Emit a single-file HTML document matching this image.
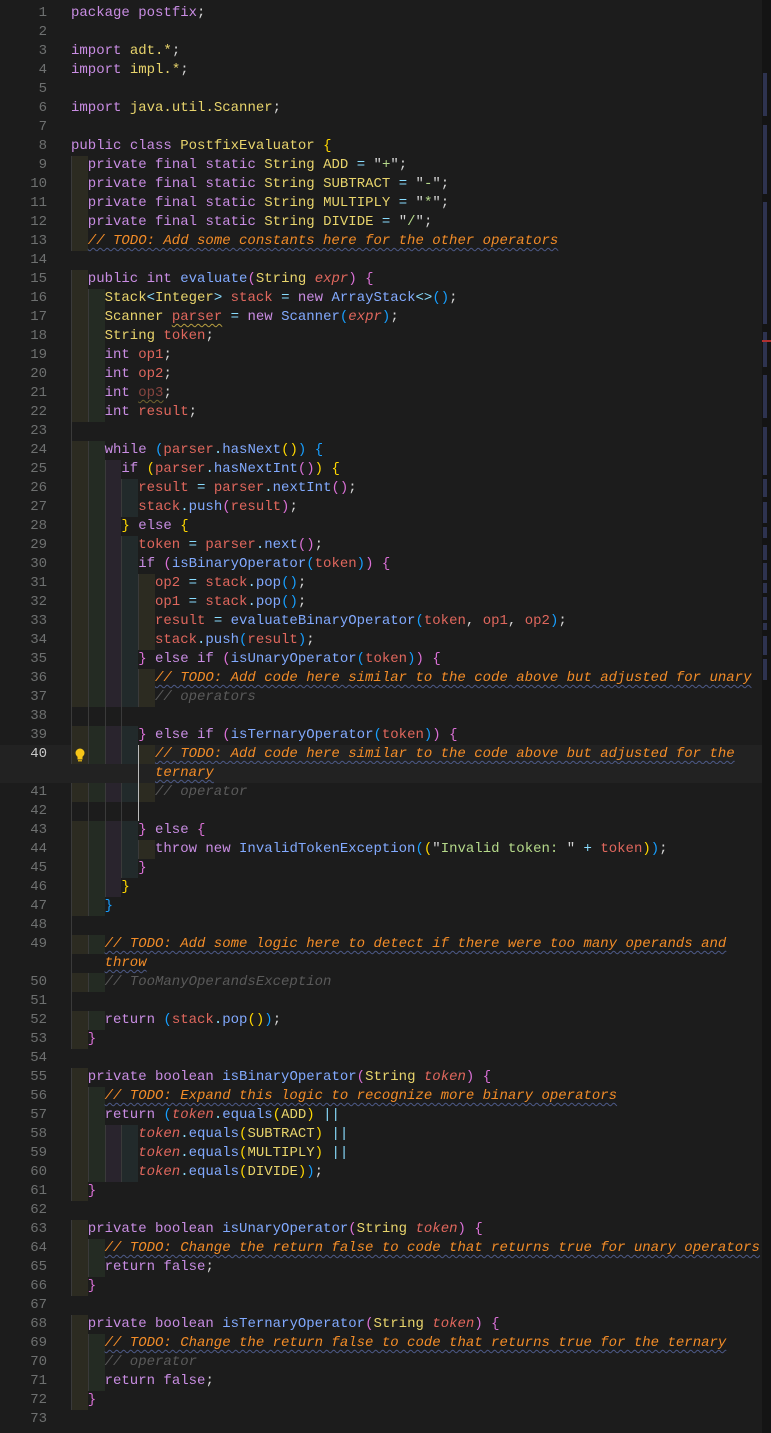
<!DOCTYPE html>
<html><head><meta charset="utf-8"><style>
html,body{margin:0;padding:0;background:#1c1c1c;width:771px;height:1433px;overflow:hidden}
body{position:relative;font-family:"Liberation Mono",monospace;font-size:14px;color:#d4d4d4}
#ed{position:absolute;left:0;top:4px;width:762px}
.r{height:19px;line-height:19px;position:relative;white-space:pre}
.n{position:absolute;left:0;width:47px;text-align:right;color:#6e7070}
.c{position:absolute;left:71px;top:0;height:19px}
.i{display:inline-block;width:16.8px;height:19px;vertical-align:top;box-sizing:border-box;border-left:1px solid #3a3a3a}
.i1{background:#2c2b21}.i2{background:#242b23}.i3{background:#29242d}.i4{background:#222a2b}.i5{background:#2c2b21}
.e{background:transparent}
.k{color:#c98de3}.t{color:#e8d46c}.f{color:#82aaff}.v{color:#e0675d}.p{color:#e0675d;font-style:italic}
.o{color:#89ddff}.s{color:#b5d98a}.cm{color:#f28c28;font-style:italic;text-decoration:underline wavy #4d5a88;text-decoration-thickness:1px;text-underline-offset:3px}
.g{color:#5a5a5a;font-style:italic}
.b1{color:#ffd700}.b2{color:#da70d6}.b3{color:#179fff}
.w{text-decoration:underline wavy #b8a040;text-decoration-thickness:1px;text-underline-offset:3px}
.dim{opacity:.55}
.act{background:#222222}
#sb{position:absolute;left:762px;top:0;width:9px;height:1433px;background:#141414}
.m{position:absolute;left:1px;width:4px;background:#2e3350}
</style></head><body>
<div id="ed">
<div class="r"><span class="n">1</span><span class="c"><span class="k">package</span> <span class="k">postfix</span>;</span></div>
<div class="r"><span class="n">2</span></div>
<div class="r"><span class="n">3</span><span class="c"><span class="k">import</span> <span class="t">adt.*</span>;</span></div>
<div class="r"><span class="n">4</span><span class="c"><span class="k">import</span> <span class="t">impl.*</span>;</span></div>
<div class="r"><span class="n">5</span></div>
<div class="r"><span class="n">6</span><span class="c"><span class="k">import</span> <span class="t">java.util.Scanner</span>;</span></div>
<div class="r"><span class="n">7</span></div>
<div class="r"><span class="n">8</span><span class="c"><span class="k">public</span> <span class="k">class</span> <span class="t">PostfixEvaluator</span> <span class="b1">{</span></span></div>
<div class="r"><span class="n">9</span><span class="c"><span class="i i1"></span><span class="k">private</span> <span class="k">final</span> <span class="k">static</span> <span class="t">String</span> <span class="t">ADD</span> <span class="o">=</span> "<span class="s">+</span>";</span></div>
<div class="r"><span class="n">10</span><span class="c"><span class="i i1"></span><span class="k">private</span> <span class="k">final</span> <span class="k">static</span> <span class="t">String</span> <span class="t">SUBTRACT</span> <span class="o">=</span> "<span class="s">-</span>";</span></div>
<div class="r"><span class="n">11</span><span class="c"><span class="i i1"></span><span class="k">private</span> <span class="k">final</span> <span class="k">static</span> <span class="t">String</span> <span class="t">MULTIPLY</span> <span class="o">=</span> "<span class="s">*</span>";</span></div>
<div class="r"><span class="n">12</span><span class="c"><span class="i i1"></span><span class="k">private</span> <span class="k">final</span> <span class="k">static</span> <span class="t">String</span> <span class="t">DIVIDE</span> <span class="o">=</span> "<span class="s">/</span>";</span></div>
<div class="r"><span class="n">13</span><span class="c"><span class="i i1"></span><span class="cm">// TODO: Add some constants here for the other operators</span></span></div>
<div class="r"><span class="n">14</span></div>
<div class="r"><span class="n">15</span><span class="c"><span class="i i1"></span><span class="k">public</span> <span class="k">int</span> <span class="f">evaluate</span><span class="b2">(</span><span class="t">String</span> <span class="p">expr</span><span class="b2">)</span> <span class="b2">{</span></span></div>
<div class="r"><span class="n">16</span><span class="c"><span class="i i1"></span><span class="i i2"></span><span class="t">Stack</span><span class="o">&lt;</span><span class="t">Integer</span><span class="o">&gt;</span> <span class="v">stack</span> <span class="o">=</span> <span class="k">new</span> <span class="f">ArrayStack</span><span class="o">&lt;&gt;</span><span class="b3">()</span>;</span></div>
<div class="r"><span class="n">17</span><span class="c"><span class="i i1"></span><span class="i i2"></span><span class="t">Scanner</span> <span class="v w">parser</span> <span class="o">=</span> <span class="k">new</span> <span class="f">Scanner</span><span class="b3">(</span><span class="p">expr</span><span class="b3">)</span>;</span></div>
<div class="r"><span class="n">18</span><span class="c"><span class="i i1"></span><span class="i i2"></span><span class="t">String</span> <span class="v">token</span>;</span></div>
<div class="r"><span class="n">19</span><span class="c"><span class="i i1"></span><span class="i i2"></span><span class="k">int</span> <span class="v">op1</span>;</span></div>
<div class="r"><span class="n">20</span><span class="c"><span class="i i1"></span><span class="i i2"></span><span class="k">int</span> <span class="v">op2</span>;</span></div>
<div class="r"><span class="n">21</span><span class="c"><span class="i i1"></span><span class="i i2"></span><span class="k">int</span> <span class="v w dim">op3</span>;</span></div>
<div class="r"><span class="n">22</span><span class="c"><span class="i i1"></span><span class="i i2"></span><span class="k">int</span> <span class="v">result</span>;</span></div>
<div class="r"><span class="n">23</span><span class="c"><span class="i e"></span></span></div>
<div class="r"><span class="n">24</span><span class="c"><span class="i i1"></span><span class="i i2"></span><span class="k">while</span> <span class="b3">(</span><span class="v">parser</span><span class="o">.</span><span class="f">hasNext</span><span class="b1">()</span><span class="b3">)</span> <span class="b3">{</span></span></div>
<div class="r"><span class="n">25</span><span class="c"><span class="i i1"></span><span class="i i2"></span><span class="i i3"></span><span class="k">if</span> <span class="b1">(</span><span class="v">parser</span><span class="o">.</span><span class="f">hasNextInt</span><span class="b2">()</span><span class="b1">)</span> <span class="b1">{</span></span></div>
<div class="r"><span class="n">26</span><span class="c"><span class="i i1"></span><span class="i i2"></span><span class="i i3"></span><span class="i i4"></span><span class="v">result</span> <span class="o">=</span> <span class="v">parser</span><span class="o">.</span><span class="f">nextInt</span><span class="b2">()</span>;</span></div>
<div class="r"><span class="n">27</span><span class="c"><span class="i i1"></span><span class="i i2"></span><span class="i i3"></span><span class="i i4"></span><span class="v">stack</span><span class="o">.</span><span class="f">push</span><span class="b2">(</span><span class="v">result</span><span class="b2">)</span>;</span></div>
<div class="r"><span class="n">28</span><span class="c"><span class="i i1"></span><span class="i i2"></span><span class="i i3"></span><span class="b1">}</span> <span class="k">else</span> <span class="b1">{</span></span></div>
<div class="r"><span class="n">29</span><span class="c"><span class="i i1"></span><span class="i i2"></span><span class="i i3"></span><span class="i i4"></span><span class="v">token</span> <span class="o">=</span> <span class="v">parser</span><span class="o">.</span><span class="f">next</span><span class="b2">()</span>;</span></div>
<div class="r"><span class="n">30</span><span class="c"><span class="i i1"></span><span class="i i2"></span><span class="i i3"></span><span class="i i4"></span><span class="k">if</span> <span class="b2">(</span><span class="f">isBinaryOperator</span><span class="b3">(</span><span class="v">token</span><span class="b3">)</span><span class="b2">)</span> <span class="b2">{</span></span></div>
<div class="r"><span class="n">31</span><span class="c"><span class="i i1"></span><span class="i i2"></span><span class="i i3"></span><span class="i i4"></span><span class="i i5"></span><span class="v">op2</span> <span class="o">=</span> <span class="v">stack</span><span class="o">.</span><span class="f">pop</span><span class="b3">()</span>;</span></div>
<div class="r"><span class="n">32</span><span class="c"><span class="i i1"></span><span class="i i2"></span><span class="i i3"></span><span class="i i4"></span><span class="i i5"></span><span class="v">op1</span> <span class="o">=</span> <span class="v">stack</span><span class="o">.</span><span class="f">pop</span><span class="b3">()</span>;</span></div>
<div class="r"><span class="n">33</span><span class="c"><span class="i i1"></span><span class="i i2"></span><span class="i i3"></span><span class="i i4"></span><span class="i i5"></span><span class="v">result</span> <span class="o">=</span> <span class="f">evaluateBinaryOperator</span><span class="b3">(</span><span class="v">token</span>, <span class="v">op1</span>, <span class="v">op2</span><span class="b3">)</span>;</span></div>
<div class="r"><span class="n">34</span><span class="c"><span class="i i1"></span><span class="i i2"></span><span class="i i3"></span><span class="i i4"></span><span class="i i5"></span><span class="v">stack</span><span class="o">.</span><span class="f">push</span><span class="b3">(</span><span class="v">result</span><span class="b3">)</span>;</span></div>
<div class="r"><span class="n">35</span><span class="c"><span class="i i1"></span><span class="i i2"></span><span class="i i3"></span><span class="i i4"></span><span class="b2">}</span> <span class="k">else</span> <span class="k">if</span> <span class="b2">(</span><span class="f">isUnaryOperator</span><span class="b3">(</span><span class="v">token</span><span class="b3">)</span><span class="b2">)</span> <span class="b2">{</span></span></div>
<div class="r"><span class="n">36</span><span class="c"><span class="i i1"></span><span class="i i2"></span><span class="i i3"></span><span class="i i4"></span><span class="i i5"></span><span class="cm">// TODO: Add code here similar to the code above but adjusted for unary</span></span></div>
<div class="r"><span class="n">37</span><span class="c"><span class="i i1"></span><span class="i i2"></span><span class="i i3"></span><span class="i i4"></span><span class="i i5"></span><span class="g">// operators</span></span></div>
<div class="r"><span class="n">38</span><span class="c"><span class="i e"></span><span class="i e"></span><span class="i e"></span><span class="i e"></span></span></div>
<div class="r"><span class="n">39</span><span class="c"><span class="i i1"></span><span class="i i2"></span><span class="i i3"></span><span class="i i4"></span><span class="b2">}</span> <span class="k">else</span> <span class="k">if</span> <span class="b2">(</span><span class="f">isTernaryOperator</span><span class="b3">(</span><span class="v">token</span><span class="b3">)</span><span class="b2">)</span> <span class="b2">{</span></span></div>
<div class="r act"><span class="n" style="color:#c8c8c8">40</span><span class="c"><span class="i i1" style="position:relative"><svg width="12" height="14" viewBox="0 0 12 14" style="position:absolute;left:2px;top:3px"><circle cx="6" cy="5" r="4.5" fill="#f5c518"/><rect x="3.5" y="8" width="5" height="3.5" fill="#f5c518"/><rect x="4" y="12" width="4" height="1.5" fill="#c9a012"/></svg></span><span class="i i2"></span><span class="i i3"></span><span class="i i4"></span><span class="i i5" style="border-left:1px solid #bbb"></span><span class="cm">// TODO: Add code here similar to the code above but adjusted for the</span></span></div>
<div class="r act"><span class="c"><span class="i e" style="border:0"></span><span class="i e" style="border:0"></span><span class="i e" style="border:0"></span><span class="i e" style="border:0"></span><span class="i e" style="border-left:1px solid #bbb"></span><span class="cm">ternary</span></span></div>
<div class="r"><span class="n">41</span><span class="c"><span class="i i1"></span><span class="i i2"></span><span class="i i3"></span><span class="i i4"></span><span class="i i5" style="border-left:1px solid #bbb"></span><span class="g">// operator</span></span></div>
<div class="r"><span class="n">42</span><span class="c"><span class="i e"></span><span class="i e"></span><span class="i e"></span><span class="i e"></span><span class="i e" style="border-left:1px solid #bbb"></span></span></div>
<div class="r"><span class="n">43</span><span class="c"><span class="i i1"></span><span class="i i2"></span><span class="i i3"></span><span class="i i4"></span><span class="b2">}</span> <span class="k">else</span> <span class="b2">{</span></span></div>
<div class="r"><span class="n">44</span><span class="c"><span class="i i1"></span><span class="i i2"></span><span class="i i3"></span><span class="i i4"></span><span class="i i5"></span><span class="k">throw</span> <span class="k">new</span> <span class="f">InvalidTokenException</span><span class="b3">(</span><span class="b1">(</span>"<span class="s">Invalid token: </span>" <span class="o">+</span> <span class="v">token</span><span class="b1">)</span><span class="b3">)</span>;</span></div>
<div class="r"><span class="n">45</span><span class="c"><span class="i i1"></span><span class="i i2"></span><span class="i i3"></span><span class="i i4"></span><span class="b2">}</span></span></div>
<div class="r"><span class="n">46</span><span class="c"><span class="i i1"></span><span class="i i2"></span><span class="i i3"></span><span class="b1">}</span></span></div>
<div class="r"><span class="n">47</span><span class="c"><span class="i i1"></span><span class="i i2"></span><span class="b3">}</span></span></div>
<div class="r"><span class="n">48</span><span class="c"><span class="i e"></span></span></div>
<div class="r"><span class="n">49</span><span class="c"><span class="i i1"></span><span class="i i2"></span><span class="cm">// TODO: Add some logic here to detect if there were too many operands and</span></span></div>
<div class="r"><span class="c"><span class="i e"></span><span class="i e" style="border:0"></span><span class="cm">throw</span></span></div>
<div class="r"><span class="n">50</span><span class="c"><span class="i i1"></span><span class="i i2"></span><span class="g">// TooManyOperandsException</span></span></div>
<div class="r"><span class="n">51</span><span class="c"><span class="i e"></span></span></div>
<div class="r"><span class="n">52</span><span class="c"><span class="i i1"></span><span class="i i2"></span><span class="k">return</span> <span class="b3">(</span><span class="v">stack</span><span class="o">.</span><span class="f">pop</span><span class="b1">()</span><span class="b3">)</span>;</span></div>
<div class="r"><span class="n">53</span><span class="c"><span class="i i1"></span><span class="b2">}</span></span></div>
<div class="r"><span class="n">54</span></div>
<div class="r"><span class="n">55</span><span class="c"><span class="i i1"></span><span class="k">private</span> <span class="k">boolean</span> <span class="f">isBinaryOperator</span><span class="b2">(</span><span class="t">String</span> <span class="p">token</span><span class="b2">)</span> <span class="b2">{</span></span></div>
<div class="r"><span class="n">56</span><span class="c"><span class="i i1"></span><span class="i i2"></span><span class="cm">// TODO: Expand this logic to recognize more binary operators</span></span></div>
<div class="r"><span class="n">57</span><span class="c"><span class="i i1"></span><span class="i i2"></span><span class="k">return</span> <span class="b3">(</span><span class="p">token</span><span class="o">.</span><span class="f">equals</span><span class="b1">(</span><span class="t">ADD</span><span class="b1">)</span> <span class="o">||</span></span></div>
<div class="r"><span class="n">58</span><span class="c"><span class="i i1"></span><span class="i i2"></span><span class="i i3"></span><span class="i i4"></span><span class="p">token</span><span class="o">.</span><span class="f">equals</span><span class="b1">(</span><span class="t">SUBTRACT</span><span class="b1">)</span> <span class="o">||</span></span></div>
<div class="r"><span class="n">59</span><span class="c"><span class="i i1"></span><span class="i i2"></span><span class="i i3"></span><span class="i i4"></span><span class="p">token</span><span class="o">.</span><span class="f">equals</span><span class="b1">(</span><span class="t">MULTIPLY</span><span class="b1">)</span> <span class="o">||</span></span></div>
<div class="r"><span class="n">60</span><span class="c"><span class="i i1"></span><span class="i i2"></span><span class="i i3"></span><span class="i i4"></span><span class="p">token</span><span class="o">.</span><span class="f">equals</span><span class="b1">(</span><span class="t">DIVIDE</span><span class="b1">)</span><span class="b3">)</span>;</span></div>
<div class="r"><span class="n">61</span><span class="c"><span class="i i1"></span><span class="b2">}</span></span></div>
<div class="r"><span class="n">62</span></div>
<div class="r"><span class="n">63</span><span class="c"><span class="i i1"></span><span class="k">private</span> <span class="k">boolean</span> <span class="f">isUnaryOperator</span><span class="b2">(</span><span class="t">String</span> <span class="p">token</span><span class="b2">)</span> <span class="b2">{</span></span></div>
<div class="r"><span class="n">64</span><span class="c"><span class="i i1"></span><span class="i i2"></span><span class="cm">// TODO: Change the return false to code that returns true for unary operators</span></span></div>
<div class="r"><span class="n">65</span><span class="c"><span class="i i1"></span><span class="i i2"></span><span class="k">return</span> <span class="k">false</span>;</span></div>
<div class="r"><span class="n">66</span><span class="c"><span class="i i1"></span><span class="b2">}</span></span></div>
<div class="r"><span class="n">67</span></div>
<div class="r"><span class="n">68</span><span class="c"><span class="i i1"></span><span class="k">private</span> <span class="k">boolean</span> <span class="f">isTernaryOperator</span><span class="b2">(</span><span class="t">String</span> <span class="p">token</span><span class="b2">)</span> <span class="b2">{</span></span></div>
<div class="r"><span class="n">69</span><span class="c"><span class="i i1"></span><span class="i i2"></span><span class="cm">// TODO: Change the return false to code that returns true for the ternary</span></span></div>
<div class="r"><span class="n">70</span><span class="c"><span class="i i1"></span><span class="i i2"></span><span class="g">// operator</span></span></div>
<div class="r"><span class="n">71</span><span class="c"><span class="i i1"></span><span class="i i2"></span><span class="k">return</span> <span class="k">false</span>;</span></div>
<div class="r"><span class="n">72</span><span class="c"><span class="i i1"></span><span class="b2">}</span></span></div>
<div class="r"><span class="n">73</span></div>
</div>
<div id="sb">
<div class="m" style="top:73px;height:43px"></div>
<div class="m" style="top:125px;height:69px"></div>
<div class="m" style="top:202px;height:122px"></div>
<div class="m" style="top:332px;height:35px"></div>
<div style="position:absolute;left:0;top:340px;width:9px;height:2px;background:#b03030"></div>
<div class="m" style="top:375px;height:43px"></div>
<div class="m" style="top:427px;height:48px"></div>
<div class="m" style="top:479px;height:18px"></div>
<div class="m" style="top:502px;height:21px"></div>
<div class="m" style="top:527px;height:11px"></div>
<div class="m" style="top:545px;height:15px"></div>
<div class="m" style="top:563px;height:17px"></div>
<div class="m" style="top:583px;height:10px"></div>
<div class="m" style="top:597px;height:23px"></div>
<div class="m" style="top:623px;height:7px"></div>
<div class="m" style="top:636px;height:19px"></div>
<div class="m" style="top:659px;height:21px"></div>
</div>
</body></html>
